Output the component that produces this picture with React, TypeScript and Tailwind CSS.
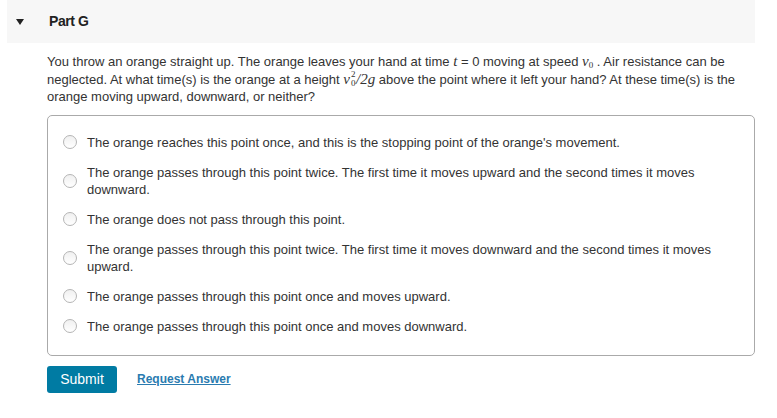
import { useState } from 'react';

const options = [
  "The orange reaches this point once, and this is the stopping point of the orange's movement.",
  'The orange passes through this point twice. The first time it moves upward and the second times it moves downward.',
  'The orange does not pass through this point.',
  'The orange passes through this point twice. The first time it moves downward and the second times it moves upward.',
  'The orange passes through this point once and moves upward.',
  'The orange passes through this point once and moves downward.',
];

const MathVar = ({ children }: { children: React.ReactNode }) => (
  <span className="font-['Liberation_Serif',serif] text-[15px] italic leading-none">{children}</span>
);

const App = () => {
  const [selected, setSelected] = useState<number | null>(null);

  return (
    <div className="min-h-[418px] w-[777px] bg-white pl-[7px] font-['Liberation_Sans',Arial,sans-serif] text-[#333]">
      <div className="w-[748px]">
        <div className="flex h-[43px] items-center bg-[#f7f7f7] pl-[9px]">
          <span className="h-0 w-0 border-x-[4px] border-t-[6px] border-x-transparent border-t-[#222]" />
          <h2 className="ml-[25px] text-[14px] font-bold tracking-[-0.4px] text-[#222]">Part G</h2>
        </div>

        <div className="pl-[40px]">
          <p className="mt-[10px] text-[13px] leading-[17.5px]">
            You throw an orange straight up. The orange leaves your hand at time <MathVar>t</MathVar> = 0 moving at
            speed{' '}
            <MathVar>
              v<span className="relative top-[2px] not-italic text-[9px]">0</span>
            </MathVar>{' '}
            . Air resistance can be neglected. At what time(s) is the orange at a height{' '}
            <MathVar>
              v
              <span className="relative inline-block h-[10px] w-[6px] not-italic">
                <span className="absolute left-[1px] top-[-4px] text-[9px] leading-none">2</span>
                <span className="absolute left-[1px] top-[5px] text-[9px] leading-none">0</span>
              </span>
              /2g
            </MathVar>{' '}
            above the point where it left your hand? At these time(s) is the orange moving upward, downward, or
            neither?
          </p>

          <div className="mt-[9px] flex flex-col gap-[13px] rounded-[5px] border border-[#aaa] pb-[20px] pl-[15px] pr-[20px] pt-[18px]">
            {options.map((text, i) => (
              <label key={i} className="flex cursor-pointer items-center gap-[10px]">
                <input
                  type="radio"
                  name="partG"
                  checked={selected === i}
                  onChange={() => setSelected(i)}
                  className="h-[14px] w-[14px] shrink-0 cursor-pointer appearance-none rounded-full border border-[#b5b5b5] bg-gradient-to-b from-[#f0f0f0] to-white checked:border-[4px] checked:border-[#0079a3]"
                />
                <span className="text-[13px] leading-[17px]">{text}</span>
              </label>
            ))}
          </div>

          <div className="mt-[10px] flex items-center gap-[20px]">
            <button className="h-[27px] w-[70px] rounded-[3px] bg-[#007ba3] text-[14px] text-white">Submit</button>
            <a href="#" className="text-[12px] font-bold text-[#2a7bb0] underline">
              Request Answer
            </a>
          </div>
        </div>
      </div>
    </div>
  );
};

export default App;
